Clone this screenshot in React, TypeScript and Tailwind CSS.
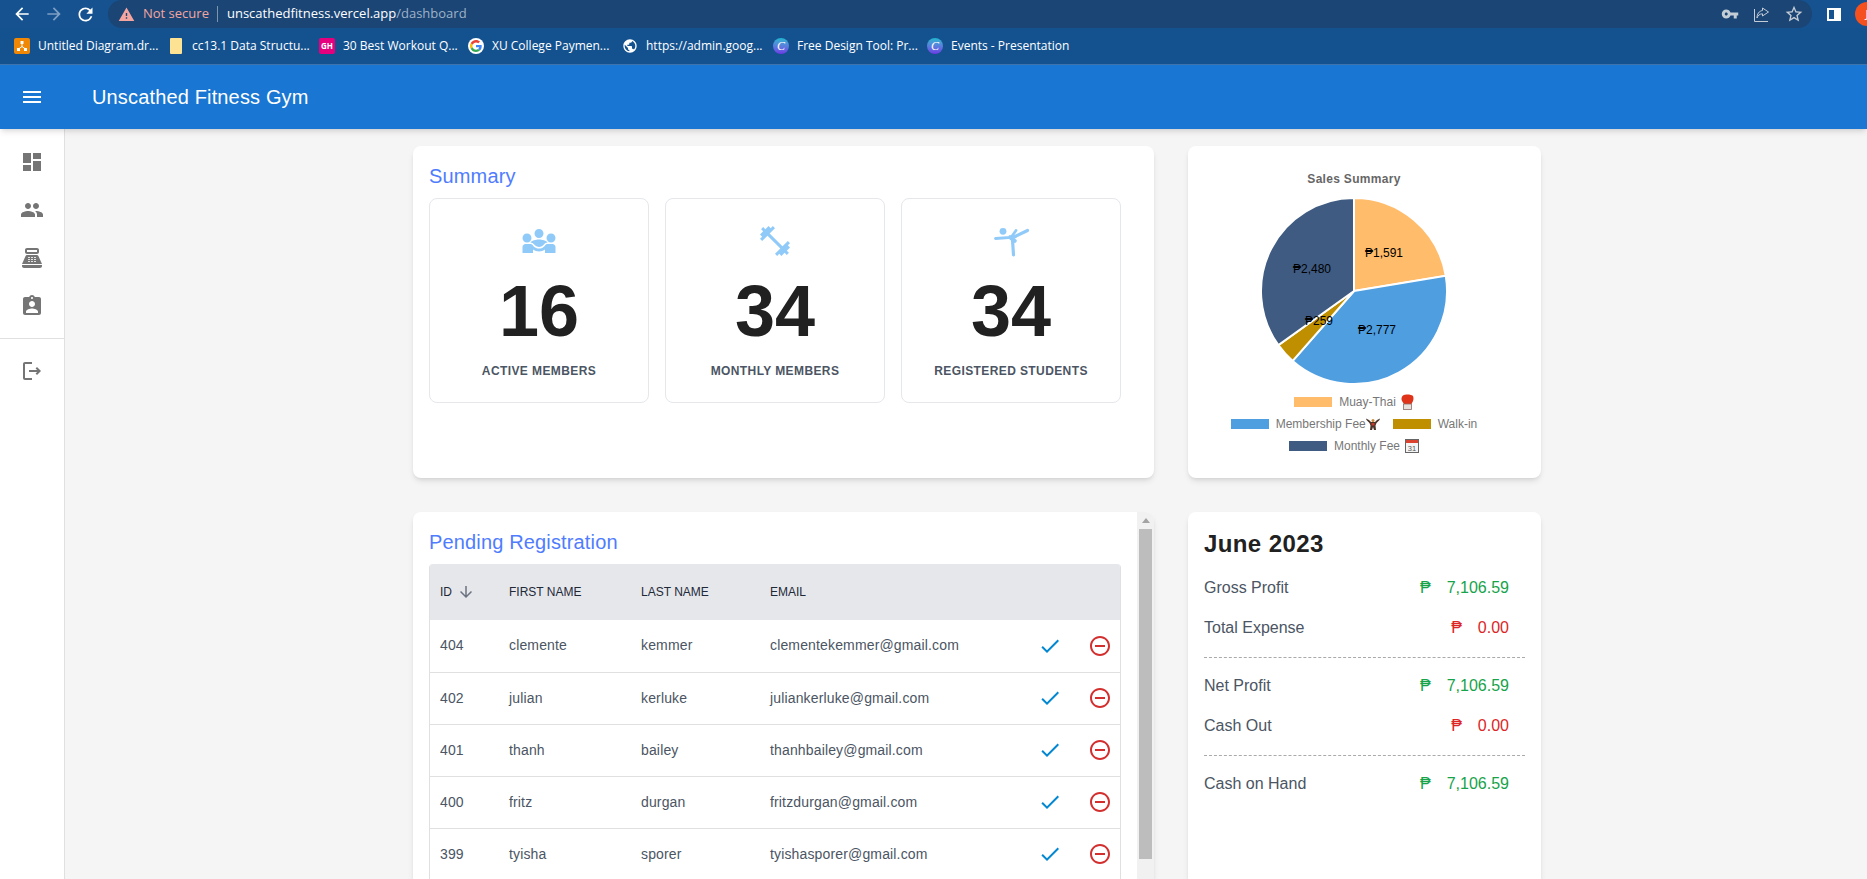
import React from "react";
import {
  MdArrowDownward,
  MdAssignmentInd,
  MdCheck,
  MdDashboard,
  MdDiversity3,
  MdFitnessCenter,
  MdMenu,
  MdOutlineLogout,
  MdPeople,
  MdPointOfSale,
  MdPublic,
  MdRefresh,
  MdRemoveCircleOutline,
  MdStarBorder,
  MdVpnKey,
  MdWarning,
  MdArrowBack,
  MdArrowForward,
} from "react-icons/md";

const rows = [
  { id: 404, first: "clemente", last: "kemmer", email: "clementekemmer@gmail.com" },
  { id: 402, first: "julian", last: "kerluke", email: "juliankerluke@gmail.com" },
  { id: 401, first: "thanh", last: "bailey", email: "thanhbailey@gmail.com" },
  { id: 400, first: "fritz", last: "durgan", email: "fritzdurgan@gmail.com" },
  { id: 399, first: "tyisha", last: "sporer", email: "tyishasporer@gmail.com" },
];

const slices = [
  { value: 1591, color: "#ffbc6b", label: "₱1,591", x: 125, y: 58 },
  { value: 2777, color: "#4f9ee0", label: "₱2,777", x: 118, y: 135 },
  { value: 259, color: "#bf8f00", label: "₱259", x: 60, y: 126 },
  { value: 2480, color: "#3f5b82", label: "₱2,480", x: 53, y: 74 },
];

function slicePath(startDeg: number, endDeg: number) {
  const c = 95;
  const r = 93;
  const a = ((startDeg - 90) * Math.PI) / 180;
  const b = ((endDeg - 90) * Math.PI) / 180;
  const large = endDeg - startDeg > 180 ? 1 : 0;
  return `M${c} ${c}L${c + r * Math.cos(a)} ${c + r * Math.sin(a)}A${r} ${r} 0 ${large} 1 ${c + r * Math.cos(b)} ${c + r * Math.sin(b)}Z`;
}

function PieChart() {
  const total = slices.reduce((sum, s) => sum + s.value, 0);
  let angle = 0;
  return (
    <svg width={190} height={190} viewBox="0 0 190 190">
      {slices.map((s) => {
        const start = angle;
        angle += (s.value / total) * 360;
        return <path key={s.label} d={slicePath(start, angle)} fill={s.color} stroke="#fff" strokeWidth={2} />;
      })}
      {slices.map((s) => (
        <text key={s.label} x={s.x} y={s.y} textAnchor="middle" dominantBaseline="middle" fontSize={12} fill="#000">
          {s.label}
        </text>
      ))}
    </svg>
  );
}

function GloveEmoji() {
  return (
    <svg width={13} height={16} viewBox="0 0 13 16">
      <path d="M2 1.5C4 0 10 0 12 2c1 2 .5 5-1 7l-.5 1H3L1 7C0 5 .5 2.5 2 1.5z" fill="#e0341a" />
      <rect x="2.5" y="10" width="8" height="5.5" fill="#e8e0dc" stroke="#8a6d66" strokeWidth="0.8" />
    </svg>
  );
}

function LifterEmoji() {
  return (
    <svg width={14} height={14} viewBox="0 0 14 14">
      <path d="M0 1.5L3 3l2 2h4l2-2 3-1.5-.5 1.5L10.5 6 9.500 8.500 10 13H8L7 10l-1 3H4l.5-4.500L3.500 6 .5 3z" fill="#4a3528" />
      <circle cx="7" cy="3.500" r="1.500" fill="#c98a3c" />
      <rect x="5.500" y="6" width="3" height="2.500" fill="#c0392b" />
    </svg>
  );
}

function CalendarEmoji() {
  return (
    <svg width={14} height={14} viewBox="0 0 14 14">
      <rect x="0.500" y="0.500" width="13" height="13" fill="#f4f4f4" stroke="#666" />
      <rect x="1" y="1" width="12" height="3" fill="#d9432f" />
      <text x="7" y="11.500" textAnchor="middle" fontSize="7.500" fill="#555">
        31
      </text>
    </svg>
  );
}

// standing figure with one leg kicked up, the package has no matching icon
function KickIcon() {
  return (
    <svg width={36} height={36} viewBox="0 0 36 36" fill="none" stroke="currentColor" strokeWidth={3.2} strokeLinecap="round">
      <circle cx="10" cy="8.300" r="3.400" fill="currentColor" stroke="none" />
      <path d="M2.500 15.500L18 14.500L23 7.500" strokeWidth={2.8} />
      <path d="M18 15.500L34.500 7.500M19.500 17L20.500 32" />
      <path d="M17 14L22 18" strokeWidth={3.6} />
    </svg>
  );
}

function LegendItem({ color, label, emoji }: { color: string; label: string; emoji?: React.ReactNode }) {
  return (
    <div className="flex h-[14px] items-center">
      <span className="h-[10px] w-[38px]" style={{ backgroundColor: color }} />
      <span className="ml-[7px] text-[12px] leading-[14px] text-[#777]">{label}</span>
      {emoji}
    </div>
  );
}

function SalesCard() {
  return (
    <div className="flex h-[332px] flex-col items-center rounded-lg bg-white pr-[21px] shadow-md">
      <p className="mt-[26px] h-[14px] text-[12px] leading-[14px] font-bold tracking-[0.3px] text-[#666]">Sales Summary</p>
      <div className="mt-[10px]">
        <PieChart />
      </div>
      <div className="mt-[9px] flex flex-col items-center gap-[8px]">
        <LegendItem color="#ffbc6b" label="Muay-Thai" emoji={<span className="ml-[5px]"><GloveEmoji /></span>} />
        <div className="flex gap-[13px]">
          <LegendItem color="#4f9ee0" label="Membership Fee" emoji={<LifterEmoji />} />
          <LegendItem color="#bf8f00" label="Walk-in" />
        </div>
        <LegendItem color="#3f5b82" label="Monthly Fee" emoji={<span className="ml-[5px]"><CalendarEmoji /></span>} />
      </div>
    </div>
  );
}

function StatCard({ icon, value, label }: { icon: React.ReactNode; value: number; label: string }) {
  return (
    <div className="flex h-[205px] flex-col items-center rounded-lg border border-[#e5e7eb] pt-[24px]">
      <div className="flex h-[36px] items-center justify-center text-[#90caf9]">{icon}</div>
      <p className="mt-[9px] h-[86px] text-[72px] leading-[86px] font-bold text-[#212121]">{value}</p>
      <p className="mt-[8px] text-[12px] leading-[18px] font-bold tracking-[0.4px] text-[#4b5563]">{label}</p>
    </div>
  );
}

function MoneyRow({ label, value, tone }: { label: string; value: string; tone: "green" | "red" }) {
  return (
    <div className="flex h-10 items-center justify-between pt-[2px] pr-[16px] text-[16px]">
      <span className="text-[#4b5563]">{label}</span>
      <span className={tone === "green" ? "flex gap-[16px] text-[#16a34a]" : "flex gap-[16px] text-[#dc2626]"}>
        <span>₱</span>
        <span>{value}</span>
      </span>
    </div>
  );
}

function GoogleIcon() {
  return (
    <span className="flex h-4 w-4 items-center justify-center rounded-full bg-white">
      <svg width={12} height={12} viewBox="0 0 48 48">
        <path fill="#EA4335" d="M24 9.500c3.500 0 6.700 1.200 9.200 3.600l6.900-6.900C35.900 2.400 30.500 0 24 0 14.600 0 6.500 5.400 2.600 13.200l8 6.200C12.500 13.700 17.800 9.500 24 9.500z" />
        <path fill="#4285F4" d="M46.900 24.500c0-1.600-.1-3.100-.4-4.500H24v9h12.900c-.6 3-2.200 5.500-4.700 7.200l7.700 6c4.500-4.200 7-10.300 7-17.700z" />
        <path fill="#FBBC05" d="M10.500 28.600c-.5-1.500-.8-3-.8-4.600s.3-3.200.8-4.600l-8-6.200C.9 16.500 0 20.100 0 24s.9 7.500 2.600 10.800l7.900-6.200z" />
        <path fill="#34A853" d="M24 48c6.500 0 11.900-2.100 15.900-5.800l-7.700-6c-2.200 1.400-4.900 2.300-8.200 2.300-6.200 0-11.500-4.200-13.400-9.900l-8 6.200C6.500 42.600 14.600 48 24 48z" />
      </svg>
    </span>
  );
}

function CanvaIcon() {
  return (
    <span className="flex h-4 w-4 items-center justify-center rounded-full bg-linear-to-b from-[#16b6cf] to-[#6c35e6] font-['Liberation_Serif',serif] text-[12px] leading-none text-white italic">
      C
    </span>
  );
}

function DrawioIcon() {
  return (
    <span className="flex h-4 w-4 items-center justify-center rounded-[2px] bg-[#f08705]">
      <svg width={12} height={12} viewBox="0 0 12 12">
        <path d="M6 4v3M2.500 9L6 6.500 9.500 9" stroke="#fff" fill="none" />
        <rect x="4.500" y="1" width="3" height="3" fill="#fff" />
        <rect x="1" y="8" width="3" height="3" fill="#fff" />
        <rect x="8" y="8" width="3" height="3" fill="#fff" />
      </svg>
    </span>
  );
}

const bookmarks: { icon: React.ReactNode; label: string; width: string }[] = [
  { icon: <DrawioIcon />, label: "Untitled Diagram.dr...", width: "w-[154px]" },
  {
    icon: <span className="ml-[2px] h-4 w-3 rounded-[1px] bg-[#fde293]" />,
    label: "cc13.1 Data Structu...",
    width: "w-[151px]",
  },
  {
    icon: (
      <span className="flex h-4 w-4 items-center justify-center rounded-[2px] bg-[#e6007e] text-[8px] font-bold text-white">
        GH
      </span>
    ),
    label: "30 Best Workout Q...",
    width: "w-[149px]",
  },
  { icon: <GoogleIcon />, label: "XU College Paymen...", width: "w-[154px]" },
  { icon: <MdPublic size={16} className="text-white" />, label: "https://admin.goog...", width: "w-[151px]" },
  { icon: <CanvaIcon />, label: "Free Design Tool: Pr...", width: "w-[154px]" },
  { icon: <CanvaIcon />, label: "Events - Presentation", width: "w-[150px]" },
];

function BrowserChrome() {
  return (
    <div className="font-['Open_Sans',sans-serif]">
      <div className="flex h-7 items-center overflow-hidden bg-[#15528f]">
        <div className="flex w-[108px] shrink-0 items-center pl-[12px] text-white">
          <MdArrowBack size={20} />
          <MdArrowForward size={20} className="ml-[12px] text-[#7f9fc4]" />
          <MdRefresh size={21} className="ml-[11px]" />
        </div>
        <div className="flex h-7 w-[1704px] shrink-0 items-center rounded-[14px] bg-[#1a4575] pl-[10px] text-[13px]">
          <MdWarning size={17} className="text-[#f5a5a0]" />
          <span className="ml-[8px] text-[#f5a5a0]">Not secure</span>
          <span className="ml-[8px] h-4 w-px bg-[#7f95ae]" />
          <span className="ml-[9px] text-white">unscathedfitness.vercel.app</span>
          <span className="text-[#9fb2c8]">/dashboard</span>
          <div className="ml-auto flex items-center gap-[14px] pr-[8px] text-[#c4ccd6]">
            <MdVpnKey size={18} />
            <svg width={17} height={17} viewBox="0 0 17 17" fill="none" stroke="#c4ccd6" strokeWidth="1">
              <path d="M1.500 3v12.500H15" />
              <path d="M9.500 2l6 4-6 4V7.800C6.500 7.800 5 9.500 4 12 4 8 6 5 9.500 4.500z" />
            </svg>
            <MdStarBorder size={20} />
          </div>
        </div>
        <div className="ml-[15px] flex h-[13px] w-[14px] shrink-0 justify-end border-[2px] border-white">
          <span className="h-full w-[5px] bg-white" />
        </div>
        <div className="ml-[14px] flex h-6 w-6 shrink-0 items-center justify-center rounded-full bg-[#f4511e] text-[11px] text-white">
          J
        </div>
      </div>
      <div className="flex h-[37px] items-center border-b border-[#3f75ad] bg-[#14528f] pl-[14px] text-[12px] text-white">
        {bookmarks.map((b) => (
          <div key={b.label + b.width} className={`flex items-center ${b.width}`}>
            <span className="flex w-6 shrink-0 justify-start">{b.icon}</span>
            <span className="whitespace-nowrap">{b.label}</span>
          </div>
        ))}
      </div>
    </div>
  );
}

function Scrollbar() {
  return (
    <div className="flex w-[17px] shrink-0 flex-col items-center bg-[#f1f1f1]">
      <div className="flex h-[17px] w-full items-center justify-center">
        <span className="h-0 w-0 border-x-[4px] border-b-[5px] border-x-transparent border-b-[#a3a3a3]" />
      </div>
      <div className="h-[330px] w-[13px] bg-[#bdbdbd]" />
    </div>
  );
}

function App() {
  return (
    <div className="flex h-[879px] flex-col overflow-hidden bg-[#f5f5f5] font-['Liberation_Sans',Arial,sans-serif]">
      <BrowserChrome />
      {/* App bar */}
      <header className="z-10 flex h-16 shrink-0 items-center bg-[#1976d2] pl-[20px] text-white shadow-md">
        <MdMenu size={24} />
        <h1 className="ml-[48px] text-[20px] leading-none font-medium tracking-[0.15px]">Unscathed Fitness Gym</h1>
      </header>
      <div className="flex min-h-0 flex-1">
        {/* Sidebar */}
        <aside className="w-[65px] shrink-0 border-r border-[#e0e0e0] bg-white pt-[9px] text-[#757575]">
          <div className="flex flex-col pb-[8px]">
            {[MdDashboard, MdPeople, MdPointOfSale, MdAssignmentInd].map((Icon, i) => (
              <div key={i} className="flex h-12 items-center justify-center">
                <Icon size={24} />
              </div>
            ))}
          </div>
          <div className="border-t border-[#e0e0e0] pt-[8px]">
            <div className="flex h-12 items-center justify-center">
              <MdOutlineLogout size={24} />
            </div>
          </div>
        </aside>
        {/* Main */}
        <main className="min-w-0 flex-1 pt-[17px] pl-[348px]">
          <div className="grid w-[1128px] grid-cols-[741px_353px] gap-[34px]">
            <div className="h-[332px] rounded-lg bg-white p-[16px] pr-[33px] shadow-md">
              <h2 className="h-[36px] text-[20px] leading-[28px] tracking-[0.15px] text-[#4f7cff]">Summary</h2>
              <div className="grid grid-cols-3 gap-[16px]">
                <StatCard icon={<MdDiversity3 size={36} />} value={16} label="ACTIVE MEMBERS" />
                <StatCard icon={<MdFitnessCenter size={36} />} value={34} label="MONTHLY MEMBERS" />
                <StatCard icon={<KickIcon />} value={34} label="REGISTERED STUDENTS" />
              </div>
            </div>
            <SalesCard />
            <div className="flex h-[400px] overflow-hidden rounded-lg bg-white shadow-md">
              <div className="min-w-0 flex-1 p-[16px]">
                <h2 className="h-[36px] text-[20px] leading-[28px] tracking-[0.15px] text-[#4f7cff]">
                  Pending Registration
                </h2>
                <div className="overflow-hidden rounded-t border-x border-[#e0e0e0]">
                  <table className="w-full table-fixed border-collapse text-left text-[14px] tracking-[0.15px] text-[#4b5563]">
                    <colgroup>
                      <col className="w-[68px]" />
                      <col className="w-[132px]" />
                      <col className="w-[129px]" />
                      <col className="w-[266px]" />
                      <col className="w-[50px]" />
                      <col className="w-[45px]" />
                    </colgroup>
                    <thead className="bg-[#e5e7eb] text-[12px] tracking-normal text-[#1f2937]">
                      <tr className="h-[56px]">
                        <th className="pl-[10px] font-normal">
                          <span className="flex items-center gap-[5px]">
                            ID <MdArrowDownward size={18} className="text-[#6b7280]" />
                          </span>
                        </th>
                        <th className="pl-[11px] font-normal">FIRST NAME</th>
                        <th className="pl-[11px] font-normal">LAST NAME</th>
                        <th className="pl-[11px] font-normal">EMAIL</th>
                        <th />
                        <th />
                      </tr>
                    </thead>
                    <tbody>
                      {rows.map((r) => (
                        <tr key={r.id} className="h-[52px] border-b border-[#e0e0e0]">
                          <td className="pl-[10px]">{r.id}</td>
                          <td className="pl-[11px]">{r.first}</td>
                          <td className="pl-[11px]">{r.last}</td>
                          <td className="pl-[11px]">{r.email}</td>
                          <td>
                            <MdCheck size={24} className="mx-auto text-[#0288d1]" />
                          </td>
                          <td>
                            <MdRemoveCircleOutline size={24} className="ml-auto mr-[8px] text-[#d32f2f]" />
                          </td>
                        </tr>
                      ))}
                    </tbody>
                  </table>
                </div>
              </div>
              <Scrollbar />
            </div>
            <div className="h-[400px] rounded-lg bg-white p-[16px] shadow-md">
              <h2 className="mb-[7px] text-[24px] leading-[32px] font-bold tracking-[0.4px] text-[#212121]">June 2023</h2>
              <MoneyRow label="Gross Profit" value="7,106.59" tone="green" />
              <MoneyRow label="Total Expense" value="0.00" tone="red" />
              <div className="mt-[10px] mb-[7px] border-t border-dashed border-[#aaa]" />
              <MoneyRow label="Net Profit" value="7,106.59" tone="green" />
              <MoneyRow label="Cash Out" value="0.00" tone="red" />
              <div className="mt-[10px] mb-[7px] border-t border-dashed border-[#aaa]" />
              <MoneyRow label="Cash on Hand" value="7,106.59" tone="green" />
            </div>
          </div>
        </main>
      </div>
    </div>
  );
}

export default App;
